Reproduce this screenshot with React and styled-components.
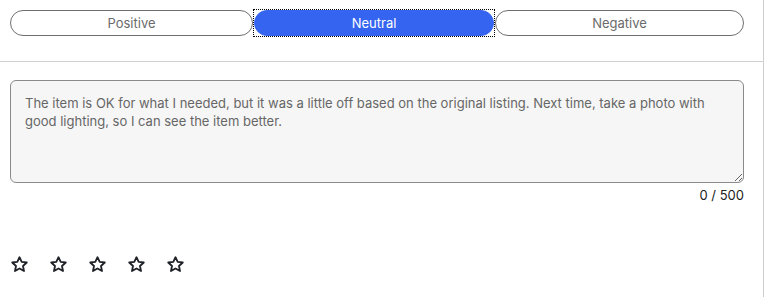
import styled, { createGlobalStyle } from "styled-components";
import { useState } from "react";

const GlobalStyle = createGlobalStyle`
  body {
    margin: 0;
    background: #fff;
    font-family: Inter, "Noto Sans", Arial, sans-serif;
  }
`;

const options = ["Positive", "Neutral", "Negative"];

const StarIcon = () => (
  <svg width="19" height="19" viewBox="0 0 24 24" fill="none">
    <path
      d="M12 2.8l2.75 5.9 6.45.75-4.8 4.42 1.3 6.38L12 17.05l-5.7 3.2 1.3-6.38L2.8 9.45l6.45-.75z"
      stroke="#1f2328"
      strokeWidth="2.3"
      strokeLinejoin="round"
    />
  </svg>
);

const App = () => {
  const [rating, setRating] = useState("Neutral");
  const [text, setText] = useState(
    "The item is OK for what I needed, but it was a little off based on the original listing. Next time, take a photo with good lighting, so I can see the item better."
  );

  return (
    <Page>
      <GlobalStyle />
      <Header>
        <Segments>
          {options.map((opt) => (
            <Cell key={opt} $active={rating === opt}>
              <Segment $active={rating === opt} onClick={() => setRating(opt)}>
                {opt}
              </Segment>
            </Cell>
          ))}
        </Segments>
      </Header>
      <Body>
        <TextArea value={text} onChange={(e) => setText(e.target.value)} />
        <Counter>0 / 500</Counter>
        <Stars>
          {[1, 2, 3, 4, 5].map((n) => (
            <Star key={n}>
              <StarIcon />
            </Star>
          ))}
        </Stars>
      </Body>
    </Page>
  );
};

export default App;

const Page = styled.div`
  width: 764px;
  min-height: 100vh;
  border-right: 1px solid #cfcfcf;
  box-sizing: border-box;
`;

const Header = styled.div`
  padding: 10px 19px 25px 10px;
  border-bottom: 1px solid #d0d0d0;
`;

const Segments = styled.div`
  display: grid;
  grid-template-columns: 243px 240px 249px;
  column-gap: 1px;
`;

const Cell = styled.div`
  display: flex;
  outline: ${(p) => (p.$active ? "1px dotted #000" : "none")};
`;

const Segment = styled.button`
  flex: 1;
  height: 26px;
  border-radius: 13px;
  font-family: Inter, "Noto Sans", Arial, sans-serif;
  font-size: 13px;
  cursor: pointer;
  border: 1px solid ${(p) => (p.$active ? "#3565f0" : "#6f6f6f")};
  background: ${(p) => (p.$active ? "#3565f0" : "#fff")};
  color: ${(p) => (p.$active ? "#fff" : "#6b6b6b")};
  outline: none;
  padding: 0;
`;

const Body = styled.div`
  padding: 18px 19px 0 10px;
`;

const TextArea = styled.textarea`
  display: block;
  width: 100%;
  height: 103px;
  box-sizing: border-box;
  padding: 13px 14px;
  border: 1px solid #8a8a8a;
  border-radius: 6px;
  background: #f6f6f6;
  color: #666;
  font-family: Inter, "Noto Sans", Arial, sans-serif;
  font-size: 13px;
  line-height: 18px;
  resize: vertical;
  outline: none;
`;

const Counter = styled.div`
  text-align: right;
  margin-top: 4px;
  font-size: 13px;
  color: #222;
`;

const Stars = styled.div`
  display: flex;
  gap: 20px;
  margin-top: 52px;
`;

const Star = styled.span`
  display: flex;
  width: 19px;
  height: 19px;
`;
